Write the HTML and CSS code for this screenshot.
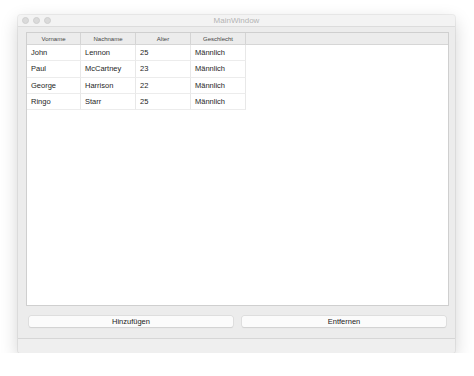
FILE: index.html
```html
<!DOCTYPE html>
<html>
<head>
<meta charset="utf-8">
<link rel="stylesheet" href="styles.css">
</head>
<body>
<div class="window">
  <div class="titlebar">
    <div class="lights"><span class="light"></span><span class="light"></span><span class="light"></span></div>
    <div class="title">MainWindow</div>
  </div>
  <div class="content">
    <div class="table">
      <div class="row head">
        <div class="cell c1">Vorname</div>
        <div class="cell c2">Nachname</div>
        <div class="cell c3">Alter</div>
        <div class="cell c4">Geschlecht</div>
        <div class="cell fill"></div>
      </div>
      <div class="row">
        <div class="cell c1">John</div><div class="cell c2">Lennon</div><div class="cell c3">25</div><div class="cell c4">Männlich</div>
      </div>
      <div class="row">
        <div class="cell c1">Paul</div><div class="cell c2">McCartney</div><div class="cell c3">23</div><div class="cell c4">Männlich</div>
      </div>
      <div class="row">
        <div class="cell c1">George</div><div class="cell c2">Harrison</div><div class="cell c3">22</div><div class="cell c4">Männlich</div>
      </div>
      <div class="row">
        <div class="cell c1">Ringo</div><div class="cell c2">Starr</div><div class="cell c3">25</div><div class="cell c4">Männlich</div>
      </div>
    </div>
    <div class="buttons">
      <button class="btn">Hinzufügen</button>
      <button class="btn">Entfernen</button>
    </div>
  </div>
  <div class="statusbar"></div>
</div>
</body>
</html>
```
FILE: styles.css
```css
html, body {
  margin: 0;
  padding: 0;
  background: #ffffff;
  font-family: "Liberation Sans", Arial, sans-serif;
}
body {
  padding: 15px 0 0 18px;
}
.window {
  width: 437px;
  height: 338px;
  background: #ececec;
  box-shadow: 0 6px 18px rgba(0,0,0,0.18), 0 0 0 1px rgba(0,0,0,0.06);
  border-radius: 3px;
  display: flex;
  flex-direction: column;
  overflow: hidden;
}
.titlebar {
  height: 11px;
  background: #f3f3f3;
  border-bottom: 1px solid #dcdcdc;
  position: relative;
  flex: none;
}
.lights {
  display: flex;
  gap: 4px;
  padding: 2px 0 0 4px;
}
.light {
  width: 7px;
  height: 7px;
  border-radius: 50%;
  background: #dadada;
  border: 0.5px solid #cfcfcf;
  box-sizing: border-box;
}
.title {
  position: absolute;
  left: 0;
  right: 0;
  top: 0;
  text-align: center;
  font-size: 8px;
  line-height: 11px;
  color: #b4b4b4;
}
.content {
  flex: 1;
  display: flex;
  flex-direction: column;
  padding: 5px 6px 0 8px;
}
.table {
  height: 274px;
  background: #ffffff;
  border: 1px solid #cfcfcf;
  box-sizing: border-box;
}
.row {
  display: flex;
  height: 16.3px;
}
.row.head {
  height: 12px;
  background: #ececec;
  border-bottom: 1px solid #d6d6d6;
  box-sizing: border-box;
}
.cell {
  box-sizing: border-box;
  border-right: 1px solid #e8e8e8;
  border-bottom: 1px solid #ececec;
  font-size: 7.5px;
  color: #1e1e1e;
  padding-left: 4px;
  display: flex;
  align-items: center;
  white-space: nowrap;
}
.head .cell {
  border-bottom: none;
  border-right: 1px solid #d4d4d4;
  justify-content: center;
  padding-left: 0;
  font-size: 6px;
  color: #444;
}
.head .fill {
  flex: 1;
  border-right: none;
}
.c1 { width: 54px; }
.c2 { width: 55px; }
.c3 { width: 55px; }
.c4 { width: 55px; }
.buttons {
  display: flex;
  gap: 9px;
  padding: 10px 3px 0 3px;
}
.btn {
  flex: 1;
  height: 11px;
  margin: 0;
  padding: 0;
  border: none;
  border-radius: 2px;
  background: #fbfbfb;
  box-shadow: 0 0 0 0.5px #d4d4d4, 0 0.5px 1px rgba(0,0,0,0.12);
  font-family: "Liberation Sans", Arial, sans-serif;
  font-size: 7.5px;
  color: #222;
  line-height: 11px;
}
.statusbar {
  height: 14px;
  flex: none;
  border-top: 1px solid #d6d6d6;
  background: #efefef;
}
```
